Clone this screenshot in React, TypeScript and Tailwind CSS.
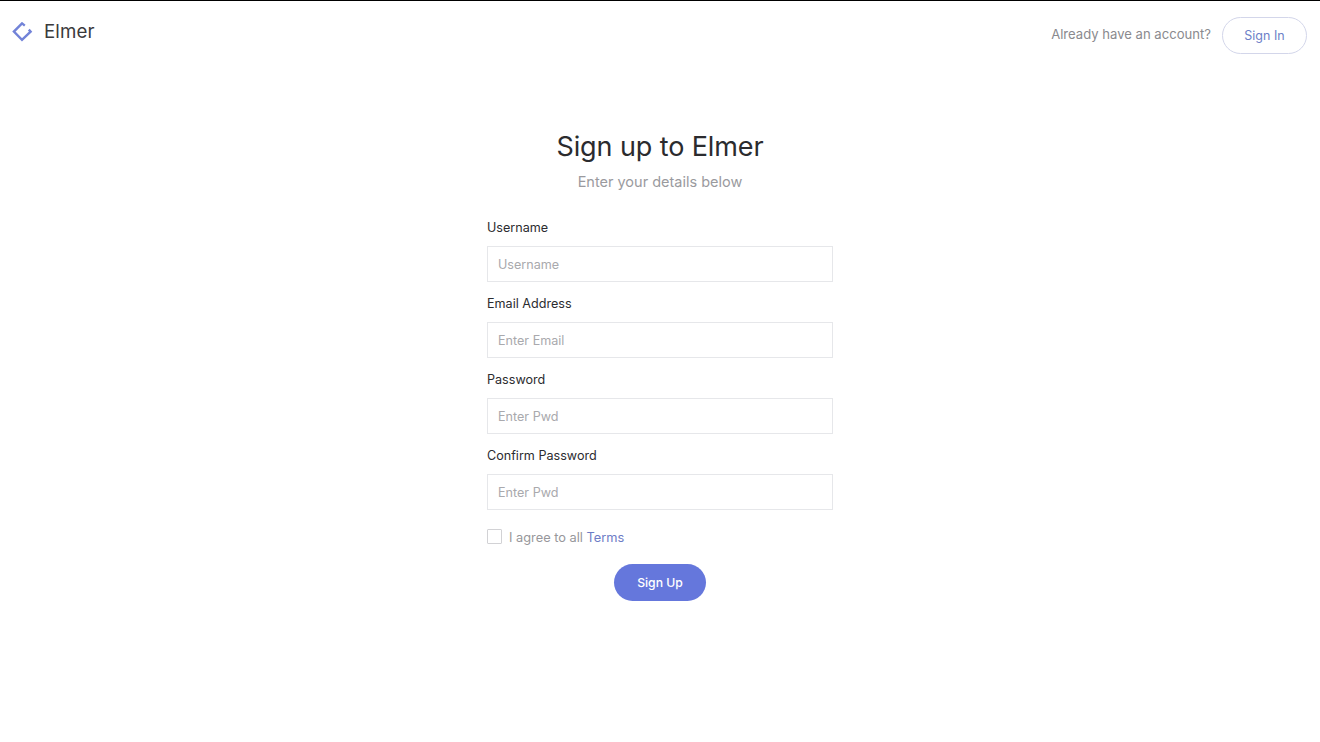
import React from 'react';

const fields = [
  { id: 'username', label: 'Username', placeholder: 'Username', type: 'text' },
  { id: 'email', label: 'Email Address', placeholder: 'Enter Email', type: 'email' },
  { id: 'password', label: 'Password', placeholder: 'Enter Pwd', type: 'password' },
  { id: 'confirm', label: 'Confirm Password', placeholder: 'Enter Pwd', type: 'password' },
];

const App: React.FC = () => {
  return (
    <div className="h-[742px] bg-white border-t border-black font-['Inter',sans-serif] overflow-hidden">
      <header className="flex items-start justify-between pl-3 pr-[13px] pt-4">
        <a href="#" className="flex items-center gap-[11px] pt-[3px]">
          <svg width="21" height="20" viewBox="0 0 21 20" fill="none" stroke="#7283d8" strokeWidth="2.4">
            <path d="M12.8 3.6 10 1.4 1.9 9.6 10 17.8l8.6-8.2-1.8-2" />
          </svg>
          <span className="text-[18.7px] leading-6 text-[#3a3a3c] tracking-[0.1px]">Elmer</span>
        </a>
        <div className="flex items-center gap-[11px]">
          <span className="pb-[2px] text-[13.1px] text-[#8a8a8e]">Already have an account?</span>
          <button className="w-[85px] h-[37px] pt-[1px] rounded-full border border-[#d3d6ea] text-[12.5px] text-[#6d7fc8] bg-white">
            Sign In
          </button>
        </div>
      </header>

      <main className="w-[346px] mx-auto mt-[75px]">
        <h1 className="text-[27px] leading-9 text-center text-[#2b2b2e] tracking-[-0.1px]">Sign up to Elmer</h1>
        <p className="mt-[7px] text-[14.5px] leading-5 text-center text-[#9a9a9e]">Enter your details below</p>

        <form className="mt-[28px]">
          {fields.map((f) => (
            <div key={f.id} className="mb-[14px]">
              <label htmlFor={f.id} className="block mb-[10px] text-[12.6px] leading-4 text-[#2c2c30]">
                {f.label}
              </label>
              <input
                id={f.id}
                type={f.type}
                placeholder={f.placeholder}
                className="block w-full h-9 px-[10px] border border-[#e6e7ea] text-[12.6px] outline-none placeholder:text-[#a9a9ad]"
              />
            </div>
          ))}

          <div className="flex items-center gap-[7px] mt-[15px]">
            <input type="checkbox" className="appearance-none w-[15px] h-[15px] border border-[#d2d2d5] rounded-[1px] bg-white" />
            <span className="pt-[3px] text-[12.8px] text-[#97979b]">
              I agree to all <a href="#" className="text-[#6d7cc6]">Terms</a>
            </span>
          </div>

          <div className="flex justify-center mt-[17px]">
            <button type="button" className="w-[92px] h-[37px] rounded-full bg-[#6577dc] text-white text-[12.2px] font-medium">
              Sign Up
            </button>
          </div>
        </form>
      </main>
    </div>
  );
};

export default App;
